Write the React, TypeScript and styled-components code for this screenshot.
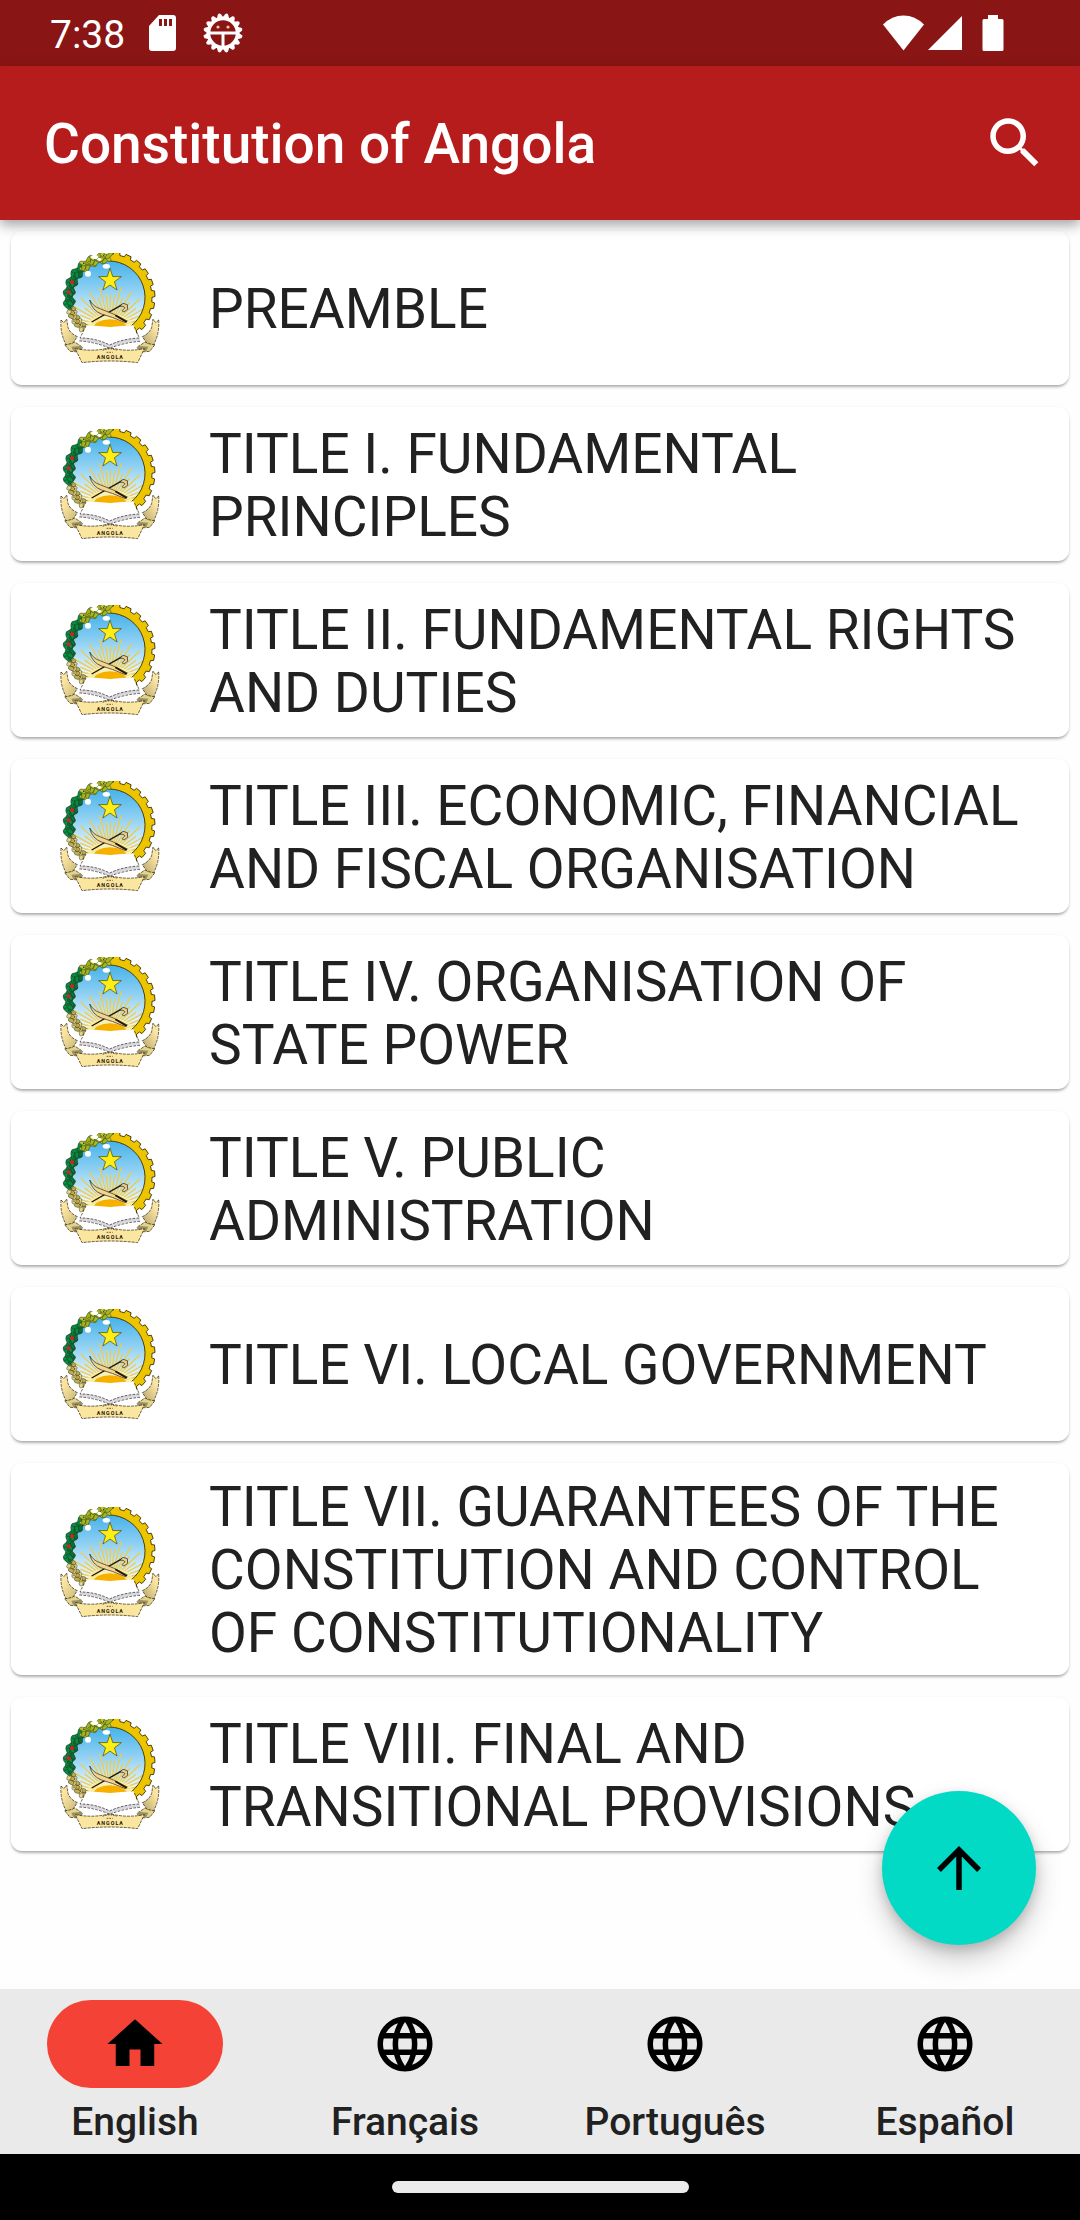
import React from "react";
import styled, { createGlobalStyle } from "styled-components";

const GlobalStyle = createGlobalStyle`
  *, *::before, *::after { box-sizing: border-box; }
  body {
    margin: 0;
    background: #fefefe;
    color: #212121;
    font-family: Roboto, "Noto Sans", sans-serif;
  }
`;

const Screen = styled.div`
  display: flex;
  flex-direction: column;
  min-height: 100vh;
`;

const StatusBar = styled.div`
  display: flex;
  justify-content: space-between;
  align-items: center;
  height: 66px;
  padding: 0 60px 0 50px;
  background: #8a1515;
  color: #fff;
`;

const StatusGroup = styled.div<{ $gap: number }>`
  display: flex;
  align-items: center;
  gap: ${(p) => p.$gap}px;
`;

const Clock = styled.time`
  padding-top: 3px;
  font-size: 39px;
  line-height: 44px;
`;

const AppBar = styled.header`
  position: relative;
  z-index: 1;
  display: flex;
  justify-content: space-between;
  align-items: center;
  height: 154px;
  padding: 0 21px 0 44px;
  background: #b71c1c;
  color: #fff;
  box-shadow: 0 5px 12px rgba(0, 0, 0, 0.36);
`;

const Title = styled.h1`
  margin: 0;
  padding-top: 3px;
  font-size: 55px;
  font-weight: 500;
  line-height: 63px;
`;

const IconButton = styled.button`
  display: flex;
  align-items: center;
  justify-content: center;
  width: 88px;
  height: 88px;
  padding: 0;
  border: 0;
  border-radius: 50%;
  background: none;
  color: inherit;
  cursor: pointer;
`;

const Main = styled.main`
  position: relative;
  flex: 1;
`;

const List = styled.ul`
  display: flex;
  flex-direction: column;
  gap: 22px;
  margin: 0;
  padding: 11px;
  list-style: none;
`;

const Card = styled.button<{ $tall: boolean }>`
  display: flex;
  align-items: center;
  gap: 44px;
  width: 100%;
  min-height: ${(p) => (p.$tall ? 212 : 154)}px;
  padding: 8px 44px;
  border: 0;
  border-radius: 11px;
  background: #fff;
  color: inherit;
  font: inherit;
  text-align: left;
  cursor: pointer;
  box-shadow: 0 3px 3px -1px rgba(0, 0, 0, 0.26), 0 1px 3px rgba(0, 0, 0, 0.12);

  & > svg {
    flex: none;
    align-self: ${(p) => (p.$tall ? "flex-start" : "center")};
    margin-top: ${(p) => (p.$tall ? 36 : 0)}px;
  }
`;

const CardLabel = styled.span`
  padding-top: 3px;
  font-size: 55px;
  line-height: 63px;
`;

const Fab = styled.button`
  position: absolute;
  right: 44px;
  bottom: 44px;
  display: flex;
  align-items: center;
  justify-content: center;
  width: 154px;
  height: 154px;
  padding: 0;
  border: 0;
  border-radius: 50%;
  background: #03dac6;
  color: #000;
  cursor: pointer;
  box-shadow: 0 14px 28px rgba(0, 0, 0, 0.2), 0 5px 12px rgba(0, 0, 0, 0.16);
`;

const Nav = styled.nav`
  display: grid;
  grid-template-columns: repeat(4, 1fr);
  height: 165px;
  padding-top: 11px;
  background: #eaeaea;
`;

const NavItem = styled.a`
  display: flex;
  flex-direction: column;
  align-items: center;
  gap: 12px;
  color: #212121;
  font-size: 39px;
  font-weight: 500;
  line-height: 44px;
  text-decoration: none;
`;

const Pill = styled.span<{ $active: boolean }>`
  display: flex;
  align-items: center;
  justify-content: center;
  width: 176px;
  height: 88px;
  border-radius: 44px;
  background: ${(p) => (p.$active ? "#f44336" : "transparent")};
  color: #000;
`;

const GestureBar = styled.div`
  display: flex;
  align-items: center;
  justify-content: center;
  height: 66px;
  background: #000;
`;

const Handle = styled.div`
  width: 297px;
  height: 12px;
  border-radius: 6px;
  background: #ebebeb;
`;

function MaterialIcon({ d }: { d: string }) {
  return (
    <svg width="66" height="66" viewBox="0 0 24 24" fill="currentColor" aria-hidden="true">
      <path d={d} />
    </svg>
  );
}

const SEARCH =
  "M15.5 14h-.79l-.28-.27C15.41 12.59 16 11.11 16 9.5 16 5.91 13.09 3 9.5 3S3 5.91 3 9.5 5.91 16 9.5 16c1.61 0 3.09-.59 4.23-1.57l.27.28v.79l5 4.99L20.49 19l-4.99-5zm-6 0C7.01 14 5 11.99 5 9.5S7.01 5 9.5 5 14 7.01 14 9.5 11.99 14 9.5 14z";
const ARROW_UP = "M4 12l1.41 1.41L11 7.83V20h2V7.83l5.58 5.59L20 12l-8-8-8 8z";
const HOME = "M10 20v-6h4v6h5v-8h3L12 3 2 12h3v8z";
const LANGUAGE =
  "M11.99 2C6.47 2 2 6.48 2 12s4.47 10 9.99 10C17.52 22 22 17.52 22 12S17.52 2 11.99 2zm6.93 6h-2.95c-.32-1.25-.78-2.45-1.38-3.56 1.84.63 3.37 1.91 4.33 3.56zM12 4.04c.83 1.2 1.48 2.53 1.91 3.96h-3.82c.43-1.43 1.08-2.76 1.91-3.96zM4.26 14C4.1 13.36 4 12.69 4 12s.1-1.36.26-2h3.38c-.08.66-.14 1.32-.14 2 0 .68.06 1.34.14 2H4.26zm.82 2h2.95c.32 1.25.78 2.45 1.38 3.56-1.84-.63-3.37-1.9-4.33-3.56zm2.95-8H5.08c.96-1.66 2.49-2.93 4.33-3.56C8.81 5.55 8.35 6.75 8.03 8zM12 19.96c-.83-1.2-1.48-2.53-1.91-3.96h3.82c-.43 1.43-1.08 2.76-1.91 3.96zM14.34 14H9.66c-.09-.66-.16-1.32-.16-2 0-.68.07-1.35.16-2h4.68c.09.65.16 1.32.16 2 0 .68-.07 1.34-.16 2zm.25 5.56c.6-1.11 1.06-2.31 1.38-3.56h2.95c-.96 1.65-2.49 2.93-4.33 3.56zM16.36 14c.08-.66.14-1.32.14-2 0-.68-.06-1.34-.14-2h3.38c.16.64.26 1.31.26 2s-.1 1.36-.26 2h-3.38z";

const point = (cx: number, cy: number, r: number, deg: number) => {
  const a = (deg * Math.PI) / 180;
  return `${(cx + r * Math.cos(a)).toFixed(1)} ${(cy + r * Math.sin(a)).toFixed(1)}`;
};

/* Right half of the cog wheel: outer edge with teeth, then the inner arc back. */
const COG = (() => {
  const outer: string[] = [];
  for (let a = -90; a < 48; a += 15) {
    outer.push(point(206, 172, 130, a), point(206, 172, 130, a + 6));
    outer.push(point(206, 172, 139, a + 7), point(206, 172, 139, a + 14));
  }
  return `M${outer.join(" L")} L${point(206, 172, 109, 52)} A109 109 0 0 0 206 63 Z`;
})();

const STAR = Array.from({ length: 10 }, (_, i) =>
  point(210, 121, i % 2 ? 14 : 36, -90 + i * 36)
).join(" L");

const RAYS = Array.from({ length: 23 }, (_, i) => {
  const a = -173 + i * 7.6;
  const len = i % 2 ? 124 : 96;
  return `M${point(210, 262, 40, a)} L${point(210, 262, Math.abs(a + 90) < 10 ? 100 : len, a)}`;
}).join(" ");

const leafColor = (a: number, i: number) => {
  if (a < 166) return i % 2 ? "#c9a94a" : "#e8d48a";
  if (a < 228) return i % 3 ? "#0a8a45" : "#0b7038";
  return i % 2 ? "#a5b520" : "#bfc42a";
};

/* Leaf clusters of the wreath, laid along the left of the sky disc. */
const LEAVES = Array.from({ length: 60 }, (_, i) => {
  const a = 126 + i * 2.45;
  const r = 112 + ((i * 7) % 3) * 7;
  const [x, y] = point(206, 172, r, a).split(" ");
  return { x, y, fill: leafColor(a, i), size: a < 166 ? 9 : 14, a, i };
});

/* Solid band under the leaves, one arc for each part of the wreath. */
const arc = (from: number, to: number) =>
  `M${point(206, 172, 119, from)} A119 119 0 0 1 ${point(206, 172, 119, to)}`;

function Emblem() {
  return (
    <svg width="110" height="110" viewBox="45 39 330 330" aria-hidden="true">
      <defs>
        <linearGradient id="sky" x1="0" y1="0" x2="0" y2="1">
          <stop offset="0" stopColor="#45b2ea" />
          <stop offset="0.4" stopColor="#8fd0f3" />
          <stop offset="0.85" stopColor="#eef8fd" />
        </linearGradient>
        <linearGradient id="foldLeft" x1="0" y1="0" x2="1" y2="1">
          <stop offset="0.3" stopColor="#fbe4a0" />
          <stop offset="1" stopColor="#c9b878" />
        </linearGradient>
        <linearGradient id="foldRight" x1="1" y1="0" x2="0" y2="1">
          <stop offset="0.3" stopColor="#fbe4a0" />
          <stop offset="1" stopColor="#b5a66c" />
        </linearGradient>
      </defs>
      <circle cx="206" cy="172" r="110" fill="url(#sky)" />
      <path d={RAYS} stroke="#eecb4c" strokeWidth="4" />
      <ellipse cx="210" cy="258" rx="70" ry="36" fill="#fff0a0" opacity="0.7" />
      <path d={COG} fill="#ecc500" stroke="#2b2200" strokeWidth="2.5" />
      <g fill="none" strokeWidth="20">
        <path d={arc(130, 166)} stroke="#dcc476" strokeWidth="13" />
        <path d={arc(166, 228)} stroke="#0a7f40" />
        <path d={arc(228, 272)} stroke="#a9b622" />
      </g>
      {LEAVES.map((l) => (
        <g key={l.i}>
          <ellipse
            cx={l.x}
            cy={l.y}
            rx={l.size}
            ry="6"
            fill={l.fill}
            stroke="#1e3314"
            strokeWidth="1.3"
            transform={`rotate(${l.a + (l.i % 2 ? 50 : -40)} ${l.x} ${l.y})`}
          />
          {l.i % 4 === 0 && <circle cx={l.x} cy={l.y} r="2" fill="#151c0c" />}
        </g>
      ))}
      <g fill="#d2202a">
        <circle cx="96" cy="126" r="6" />
        <circle cx="86" cy="157" r="6" />
      </g>
      <g fill="#fff">
        <circle cx="144" cy="101" r="9" />
        <ellipse cx="199" cy="79" rx="11" ry="7" />
        <ellipse cx="164" cy="51" rx="11" ry="6" />
        <ellipse cx="178" cy="58" rx="6" ry="5" />
      </g>
      <path d={`M${STAR} Z`} fill="#ffee12" stroke="#4a4200" strokeWidth="2" />
      <path d="M158 264 Q166 240 210 238 Q254 240 264 264 Z" fill="#f7b000" />
      <path d="M155 246 L248 193" stroke="#1c1505" strokeWidth="4" />
      <path
        d="M240 198 L249 190 L262 194 L263 208 L252 216 L246 212 L255 203 L249 199 Z"
        fill="#efcf8c"
        stroke="#1c1505"
        strokeWidth="2"
      />
      <path
        d="M149 180 Q160 200 180 206 Q220 220 262 243 L256 248 Q215 230 185 222 Q156 212 149 180 Z"
        fill="#f2d593"
        stroke="#2b2008"
        strokeWidth="2"
      />
      <path d="M226 226 L260 246" stroke="#1c1505" strokeWidth="5" />

      <g stroke="#1c1505" strokeWidth="2" strokeDasharray="9 3">
        <path d="M74 314 L104 306 L128 322 L118 336 L90 334 Z" fill="#e6d38a" />
        <path d="M345 314 L315 306 L291 322 L301 336 L329 334 Z" fill="#e6d38a" />
        <path
          d="M63 240 L72 248 L80 237 L84 262 Q90 280 112 290 L98 310 L78 314 Q60 280 63 240 Z"
          fill="url(#foldLeft)"
        />
        <path
          d="M356 240 L347 248 L339 237 L335 262 Q329 280 307 290 L321 310 L341 314 Q359 280 356 240 Z"
          fill="url(#foldRight)"
        />
      </g>
      <path d="M94 320 L126 317 L124 334 L100 334 Z" fill="#9a9060" />
      <path d="M325 320 L293 317 L295 334 L319 334 Z" fill="#9a9060" />
      <path d="M138 256 Q176 258 210 261 Q246 258 280 256 L298 302 Q250 300 210 320 Q168 298 120 300 Z" fill="#fff" />
      <path d="M120 294 Q168 294 208 314 Q250 296 298 294 L300 303 Q250 305 209 324 Q168 303 118 302 Z" fill="#d8d8e2" />
      <path
        d="M138 258 L120 294 Q168 294 209 315 Q250 296 298 294 L282 258 M118 303 Q168 306 209 325 Q250 308 300 304"
        fill="none"
        stroke="#1c1505"
        strokeWidth="2"
        strokeDasharray="8 4"
      />
      <path
        d="M106 326 Q150 334 186 328 L209 324 L234 328 Q270 334 313 326 L293 368 Q210 358 126 368 Z"
        fill="#fbe6a0"
        stroke="#1c1505"
        strokeWidth="2"
        strokeDasharray="9 3"
      />
      <path d="M188 331 Q209 322 230 331 M200 337 L218 337" fill="none" stroke="#1c1505" strokeWidth="2" strokeDasharray="5 3" />
      <text x="211" y="357" textAnchor="middle" fontFamily="Roboto, sans-serif" fontSize="16" fontWeight="700" letterSpacing="3" fill="#1c1505">
        ANGOLA
      </text>
    </svg>
  );
}

const BUG_TEETH = Array.from({ length: 16 }, (_, i) => i * 22.5 + 11.25);

function SdCardIcon() {
  return (
    <svg width="27" height="36" viewBox="0 0 27 36" aria-hidden="true">
      <path
        fillRule="evenodd"
        fill="#fff"
        d="M10 0H24Q27 0 27 3V33Q27 36 24 36H3Q0 36 0 33V11Z M10 4V11H13V4Z M15 4V11H18V4Z M20 4V11H23V4Z"
      />
    </svg>
  );
}

function DebugIcon() {
  return (
    <svg width="46" height="46" viewBox="-23 -23 46 46" aria-hidden="true">
      {BUG_TEETH.map((a) => (
        <path key={a} d="M-3.400 -15 L-1.500 -19 Q0 -20.500 1.500 -19 L3.400 -15 Z" fill="#fff" transform={`rotate(${a})`} />
      ))}
      <circle r="14.500" fill="none" stroke="#fff" strokeWidth="3.500" />
      <path d="M-13 0 H13 M0 0 V14" stroke="#fff" strokeWidth="3" />
      <circle cx="-5" cy="-6" r="1.600" fill="#f6c9a0" />
      <circle cx="5" cy="-6" r="1.600" fill="#f6c9a0" />
    </svg>
  );
}

const CHAPTERS = [
  "PREAMBLE",
  "TITLE I. FUNDAMENTAL PRINCIPLES",
  "TITLE II. FUNDAMENTAL RIGHTS AND DUTIES",
  "TITLE III. ECONOMIC, FINANCIAL AND FISCAL ORGANISATION",
  "TITLE IV. ORGANISATION OF STATE POWER",
  "TITLE V. PUBLIC ADMINISTRATION",
  "TITLE VI. LOCAL GOVERNMENT",
  "TITLE VII. GUARANTEES OF THE CONSTITUTION AND CONTROL OF CONSTITUTIONALITY",
  "TITLE VIII. FINAL AND TRANSITIONAL PROVISIONS",
];

const LANGUAGES = [
  { label: "English", icon: HOME },
  { label: "Français", icon: LANGUAGE },
  { label: "Português", icon: LANGUAGE },
  { label: "Español", icon: LANGUAGE },
];

/* Titles this long take three lines, which makes the tile a tall one. */
const TALL_TITLE = 60;

export default function App() {
  return (
    <Screen>
      <GlobalStyle />
      <StatusBar>
        <StatusGroup $gap={24}>
          <Clock>7:38</Clock>
          <SdCardIcon />
          <DebugIcon />
        </StatusGroup>
        <StatusGroup $gap={4}>
          <svg width="41" height="36" viewBox="0 0 41 36" fill="#fff" aria-hidden="true">
            <path d="M0 9.500Q9 0.500 20.500 0.500T41 9.500L20.500 35.500Z" />
          </svg>
          <svg width="34" height="36" viewBox="0 0 34 36" fill="#fff" aria-hidden="true">
            <path d="M34 1V35H0Z" />
          </svg>
          <svg width="54" height="36" viewBox="0 0 54 36" fill="#fff" aria-hidden="true">
            <path d="M22 0H32V4H36Q37.500 4 37.500 5.500V34.500Q37.500 36 36 36H18Q16.500 36 16.500 34.500V5.500Q16.500 4 18 4H22Z" />
          </svg>
        </StatusGroup>
      </StatusBar>
      <AppBar>
        <Title>Constitution of Angola</Title>
        <IconButton type="button" aria-label="Search">
          <MaterialIcon d={SEARCH} />
        </IconButton>
      </AppBar>
      <Main>
        <List>
          {CHAPTERS.map((title) => (
            <li key={title}>
              <Card type="button" $tall={title.length > TALL_TITLE}>
                <Emblem />
                <CardLabel>{title}</CardLabel>
              </Card>
            </li>
          ))}
        </List>
        <Fab type="button" aria-label="Back to top">
          <MaterialIcon d={ARROW_UP} />
        </Fab>
      </Main>
      <Nav>
        {LANGUAGES.map(({ label, icon }, i) => (
          <NavItem key={label} href={`#${label}`} aria-current={i === 0 ? "page" : undefined}>
            <Pill $active={i === 0}>
              <MaterialIcon d={icon} />
            </Pill>
            {label}
          </NavItem>
        ))}
      </Nav>
      <GestureBar>
        <Handle />
      </GestureBar>
    </Screen>
  );
}
